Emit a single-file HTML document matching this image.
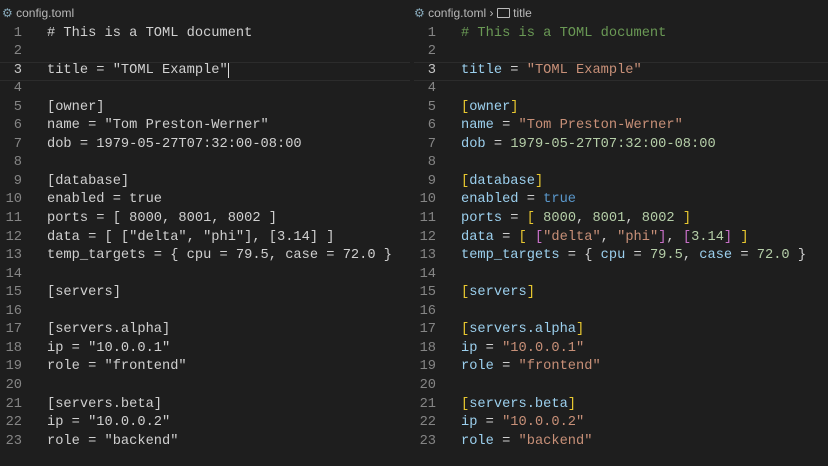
<!DOCTYPE html><html><head><style>
body{margin:0;width:828px;height:466px;background:#1e1e1e;overflow:hidden;font-family:"Liberation Mono",monospace;}
.hdr{position:absolute;top:6px;font:12px "Liberation Sans",sans-serif;color:#b8b8b8;white-space:nowrap}
.ln{position:absolute;height:18.55px;line-height:18.55px;font-size:13.7px;white-space:pre;color:#d0d0d0}
.n{position:absolute;width:22px;text-align:right;color:#858585}
.cur{position:absolute;height:17px;border-top:1px solid #2c2c2c;border-bottom:1px solid #2c2c2c}
.k{color:#9cd0ee}.s{color:#c89078}.y{color:#e8c830}.p{color:#c870c8}.m{color:#b5cea8}.b{color:#5a98cc}.c{color:#6a9955}.o{color:#d4d4d4}
</style></head><body>
<div class="cur" style="left:0;width:410px;top:62px"></div>
<div class="cur" style="left:414px;width:414px;top:62px"></div>
<div class="hdr" style="left:2px"><span style="color:#8ab">⚙</span> config.toml</div>
<div class="hdr" style="left:414px"><span style="color:#8ab">⚙</span> config.toml <span>›</span> <span style="display:inline-block;width:11px;height:8px;border:1px solid #bbb;border-radius:1px;vertical-align:-1px"></span> title</div>
<div id="L"></div><div id="R"></div>
<script>
var L=[
'# This is a TOML document','','title = "TOML Example"','','[owner]','name = "Tom Preston-Werner"','dob = 1979-05-27T07:32:00-08:00','','[database]','enabled = true','ports = [ 8000, 8001, 8002 ]','data = [ ["delta", "phi"], [3.14] ]','temp_targets = { cpu = 79.5, case = 72.0 }','','[servers]','','[servers.alpha]','ip = "10.0.0.1"','role = "frontend"','','[servers.beta]','ip = "10.0.0.2"','role = "backend"'];
var R=[
'<span class=c># This is a TOML document</span>','','<span class=k>title</span> = <span class=s>"TOML Example"</span>','','<span class=y>[</span><span class=k>owner</span><span class=y>]</span>','<span class=k>name</span> = <span class=s>"Tom Preston-Werner"</span>','<span class=k>dob</span> = <span class=m>1979-05-27T07:32:00-08:00</span>','','<span class=y>[</span><span class=k>database</span><span class=y>]</span>','<span class=k>enabled</span> = <span class=b>true</span>','<span class=k>ports</span> = <span class=y>[</span> <span class=m>8000</span>, <span class=m>8001</span>, <span class=m>8002</span> <span class=y>]</span>','<span class=k>data</span> = <span class=y>[</span> <span class=p>[</span><span class=s>"delta"</span>, <span class=s>"phi"</span><span class=p>]</span>, <span class=p>[</span><span class=m>3.14</span><span class=p>]</span> <span class=y>]</span>','<span class=k>temp_targets</span> = { <span class=k>cpu</span> = <span class=m>79.5</span>, <span class=k>case</span> = <span class=m>72.0</span> }','','<span class=y>[</span><span class=k>servers</span><span class=y>]</span>','','<span class=y>[</span><span class=k>servers.alpha</span><span class=y>]</span>','<span class=k>ip</span> = <span class=s>"10.0.0.1"</span>','<span class=k>role</span> = <span class=s>"frontend"</span>','','<span class=y>[</span><span class=k>servers.beta</span><span class=y>]</span>','<span class=k>ip</span> = <span class=s>"10.0.0.2"</span>','<span class=k>role</span> = <span class=s>"backend"</span>'];
var h='';
for(var i=0;i<23;i++){var t=(24.5+i*18.55).toFixed(2);var act=i==2?'color:#c6c6c6;':'';
h+='<div class="ln n" style="left:0;top:'+t+'px;'+act+'">'+(i+1)+'</div>';
h+='<div class="ln" style="left:47px;top:'+t+'px">'+L[i].replace(/&/g,'&amp;').replace(/</g,'&lt;')+(i==2?'<span style="border-left:1.5px solid #ddd"></span>':'')+'</div>';
h+='<div class="ln n" style="left:414px;top:'+t+'px;'+act+'">'+(i+1)+'</div>';
h+='<div class="ln" style="left:461px;top:'+t+'px">'+R[i]+'</div>';}
document.getElementById('L').innerHTML=h;
</script>
</body></html>
